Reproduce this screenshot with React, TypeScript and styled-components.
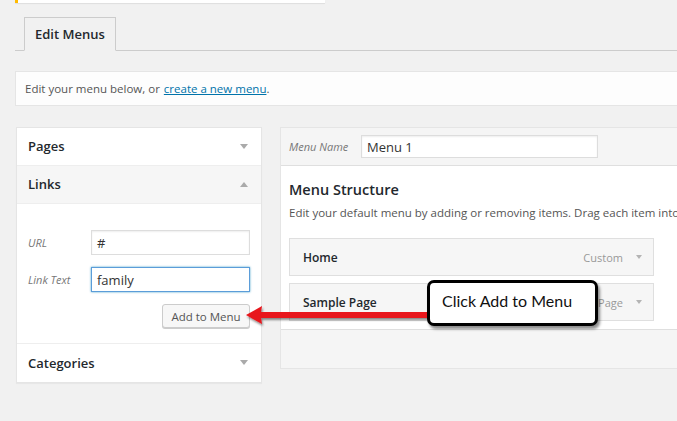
import React from "react";
import styled, { createGlobalStyle } from "styled-components";

const Global = createGlobalStyle`
  html, body { margin: 0; padding: 0; background: #f1f1f1; }
  body { width: 677px; height: 421px; overflow: hidden; font-family: "Open Sans", "Noto Sans", sans-serif; color: #444; }
  * { box-sizing: border-box; }
`;

const Page = styled.div`
  position: relative;
  width: 677px;
  height: 421px;
  padding-left: 15px;
  overflow: hidden;
`;

const Notice = styled.div`
  width: 310px;
  height: 3px;
  background: #fff;
  border-left: 3px solid #ffba00;
  box-shadow: 0 1px 1px rgba(0,0,0,0.08);
`;

const TabBar = styled.div`
  margin-top: 14px;
  display: flex;
  padding-left: 9px;
  border-bottom: 1px solid #ccc;
  width: 700px;
`;

const Tab = styled.div`
  height: 34px;
  margin-bottom: -1px;
  padding: 0 10px;
  display: flex;
  align-items: center;
  border: 1px solid #ccc;
  border-bottom-color: #f1f1f1;
  background: #f1f1f1;
  font-size: 13px;
  font-weight: 600;
  color: #23282d;
`;

const Info = styled.div`
  margin-top: 20px;
  height: 35px;
  width: 700px;
  background: #fdfdfd;
  border: 1px solid #e5e5e5;
  display: flex;
  align-items: center;
  padding-left: 9px;
  font-size: 11.5px;
  color: #555;
`;

const Link = styled.a`
  color: #0073aa;
  text-decoration: underline;
  margin-left: 4px;
`;

const Columns = styled.div`
  margin-top: 21px;
  display: flex;
  gap: 18px;
  align-items: flex-start;
`;

const Left = styled.div`
  width: 246px;
  margin-left: 1px;
  background: #fff;
  border: 1px solid #e5e5e5;
  box-shadow: 0 1px 1px rgba(0,0,0,0.04);
`;

const SectionHead = styled.div<{ $open?: boolean; $last?: boolean }>`
  height: 38px;
  display: flex;
  align-items: center;
  justify-content: space-between;
  padding: 0 13px 1px 11px;
  background: ${(p) => (p.$open ? "#f6f6f6" : "#fff")};
  border-bottom: ${(p) => (p.$last ? "none" : "1px solid #eee")};
  font-size: 13px;
  font-weight: 600;
  color: #23282d;
`;

const Caret = styled.span<{ $up?: boolean; $small?: boolean }>`
  width: 0;
  height: 0;
  border-left: ${(p) => (p.$small ? 3.5 : 4)}px solid transparent;
  border-right: ${(p) => (p.$small ? 3.5 : 4)}px solid transparent;
  ${(p) =>
    p.$up
      ? "border-bottom: 5px solid #aaa;"
      : `border-top: ${p.$small ? 4 : 5}px solid ${p.$small ? "#b4b4b4" : "#aaa"};`}
`;

const LinksBody = styled.div`
  height: 140px;
  padding: 26px 11px 0 11px;
  border-bottom: 1px solid #eee;
  display: flex;
  flex-direction: column;
  gap: 12px;
`;

const FieldRow = styled.div`
  display: flex;
  align-items: center;
`;

const Label = styled.span<{ $w: number }>`
  width: ${(p) => p.$w}px;
  font-size: 11px;
  font-style: italic;
  color: #777;
`;

const Input = styled.div<{ $w: number; $h: number; $focus?: boolean }>`
  width: ${(p) => p.$w}px;
  height: ${(p) => p.$h}px;
  background: #fff;
  border: 1px solid ${(p) => (p.$focus ? "#5b9dd9" : "#ddd")};
  box-shadow: ${(p) => (p.$focus ? "0 0 2px rgba(30,140,190,0.8)" : "inset 0 1px 2px rgba(0,0,0,0.07)")};
  display: flex;
  align-items: center;
  padding-left: 5px;
  font-size: 13px;
  color: #333;
`;

const ButtonRow = styled.div`
  display: flex;
  justify-content: flex-end;
`;

const Button = styled.div`
  width: 88px;
  height: 24px;
  background: #f7f7f7;
  border: 1px solid #ccc;
  border-radius: 3px;
  box-shadow: 0 1px 0 #ccc;
  display: flex;
  align-items: center;
  justify-content: center;
  font-size: 11.5px;
  color: #555;
`;

const Right = styled.div`
  width: 420px;
  border: 1px solid #e5e5e5;
  background: #fff;
`;

const RightHead = styled.div`
  height: 38px;
  background: #f5f5f5;
  border-bottom: 1px solid #dfdfdf;
  display: flex;
  align-items: center;
  padding-left: 8px;
`;

const RightBody = styled.div`
  height: 164px;
  padding: 14px 0 0 8px;
  border-bottom: 1px solid #dfdfdf;
`;

const Heading = styled.div`
  font-size: 14.5px;
  font-weight: 600;
  color: #23282d;
  line-height: 20px;
`;

const Desc = styled.div`
  margin-top: 5px;
  font-size: 11.5px;
  color: #555;
  white-space: nowrap;
  line-height: 16px;
`;

const Items = styled.div`
  margin-top: 17px;
  display: flex;
  flex-direction: column;
  gap: 7px;
`;

const Item = styled.div`
  width: 365px;
  height: 38px;
  background: #f6f6f6;
  border: 1px solid #dfdfdf;
  display: flex;
  align-items: center;
  justify-content: space-between;
  padding: 0 11px 0 13px;
  font-size: 12px;
  font-weight: 600;
  color: #23282d;
`;

const ItemType = styled.span`
  display: flex;
  align-items: center;
  gap: 13px;
  font-size: 11px;
  font-weight: 400;
  color: #999;
`;

const RightFoot = styled.div`
  height: 38px;
  background: #f5f5f5;
`;

const Callout = styled.div`
  position: absolute;
  left: 427px;
  top: 280px;
  width: 171px;
  height: 46px;
  background: #fff;
  border: 3px solid #000;
  border-radius: 7px;
  box-shadow: 2px 3px 3px rgba(0,0,0,0.45);
  padding: 8px 0 0 12px;
  font-family: Lato, "Open Sans", sans-serif;
  font-size: 16px;
  color: #111;
  line-height: 20px;
`;

const ArrowSvg = styled.svg`
  position: absolute;
  left: 244px;
  top: 303px;
  overflow: visible;
`;

export default function App() {
  return (
    <>
      <Global />
      <Page>
        <Notice />
        <TabBar>
          <Tab>Edit Menus</Tab>
        </TabBar>
        <Info>
          Edit your menu below, or<Link>create a new menu</Link>.
        </Info>
        <Columns>
          <Left>
            <SectionHead>
              Pages <Caret />
            </SectionHead>
            <SectionHead $open>
              Links <Caret $up />
            </SectionHead>
            <LinksBody>
              <FieldRow>
                <Label $w={63}>URL</Label>
                <Input $w={159} $h={25}>#</Input>
              </FieldRow>
              <FieldRow>
                <Label $w={63}>Link Text</Label>
                <Input $w={159} $h={25} $focus>family</Input>
              </FieldRow>
              <ButtonRow>
                <Button>Add to Menu</Button>
              </ButtonRow>
            </LinksBody>
            <SectionHead $last>
              Categories <Caret />
            </SectionHead>
          </Left>
          <Right>
            <RightHead>
              <Label $w={72}>Menu Name</Label>
              <Input $w={237} $h={23}>Menu 1</Input>
            </RightHead>
            <RightBody>
              <Heading>Menu Structure</Heading>
              <Desc>Edit your default menu by adding or removing items. Drag each item into</Desc>
              <Items>
                <Item>
                  Home
                  <ItemType>
                    Custom <Caret $small />
                  </ItemType>
                </Item>
                <Item>
                  Sample Page
                  <ItemType>
                    Page <Caret $small />
                  </ItemType>
                </Item>
              </Items>
            </RightBody>
            <RightFoot />
          </Right>
        </Columns>
        <ArrowSvg width="190" height="24" viewBox="0 0 190 24">
          <defs>
            <filter id="sh" x="-10%" y="-50%" width="120%" height="200%">
              <feDropShadow dx="1" dy="2" stdDeviation="1.2" floodColor="#000" floodOpacity="0.45" />
            </filter>
          </defs>
          <path d="M2 12 L18 3 L17 9 L190 9 L190 15 L17 15 L18 21 Z" fill="#e8151b" filter="url(#sh)" />
        </ArrowSvg>
        <Callout>Click Add to Menu</Callout>
      </Page>
    </>
  );
}
